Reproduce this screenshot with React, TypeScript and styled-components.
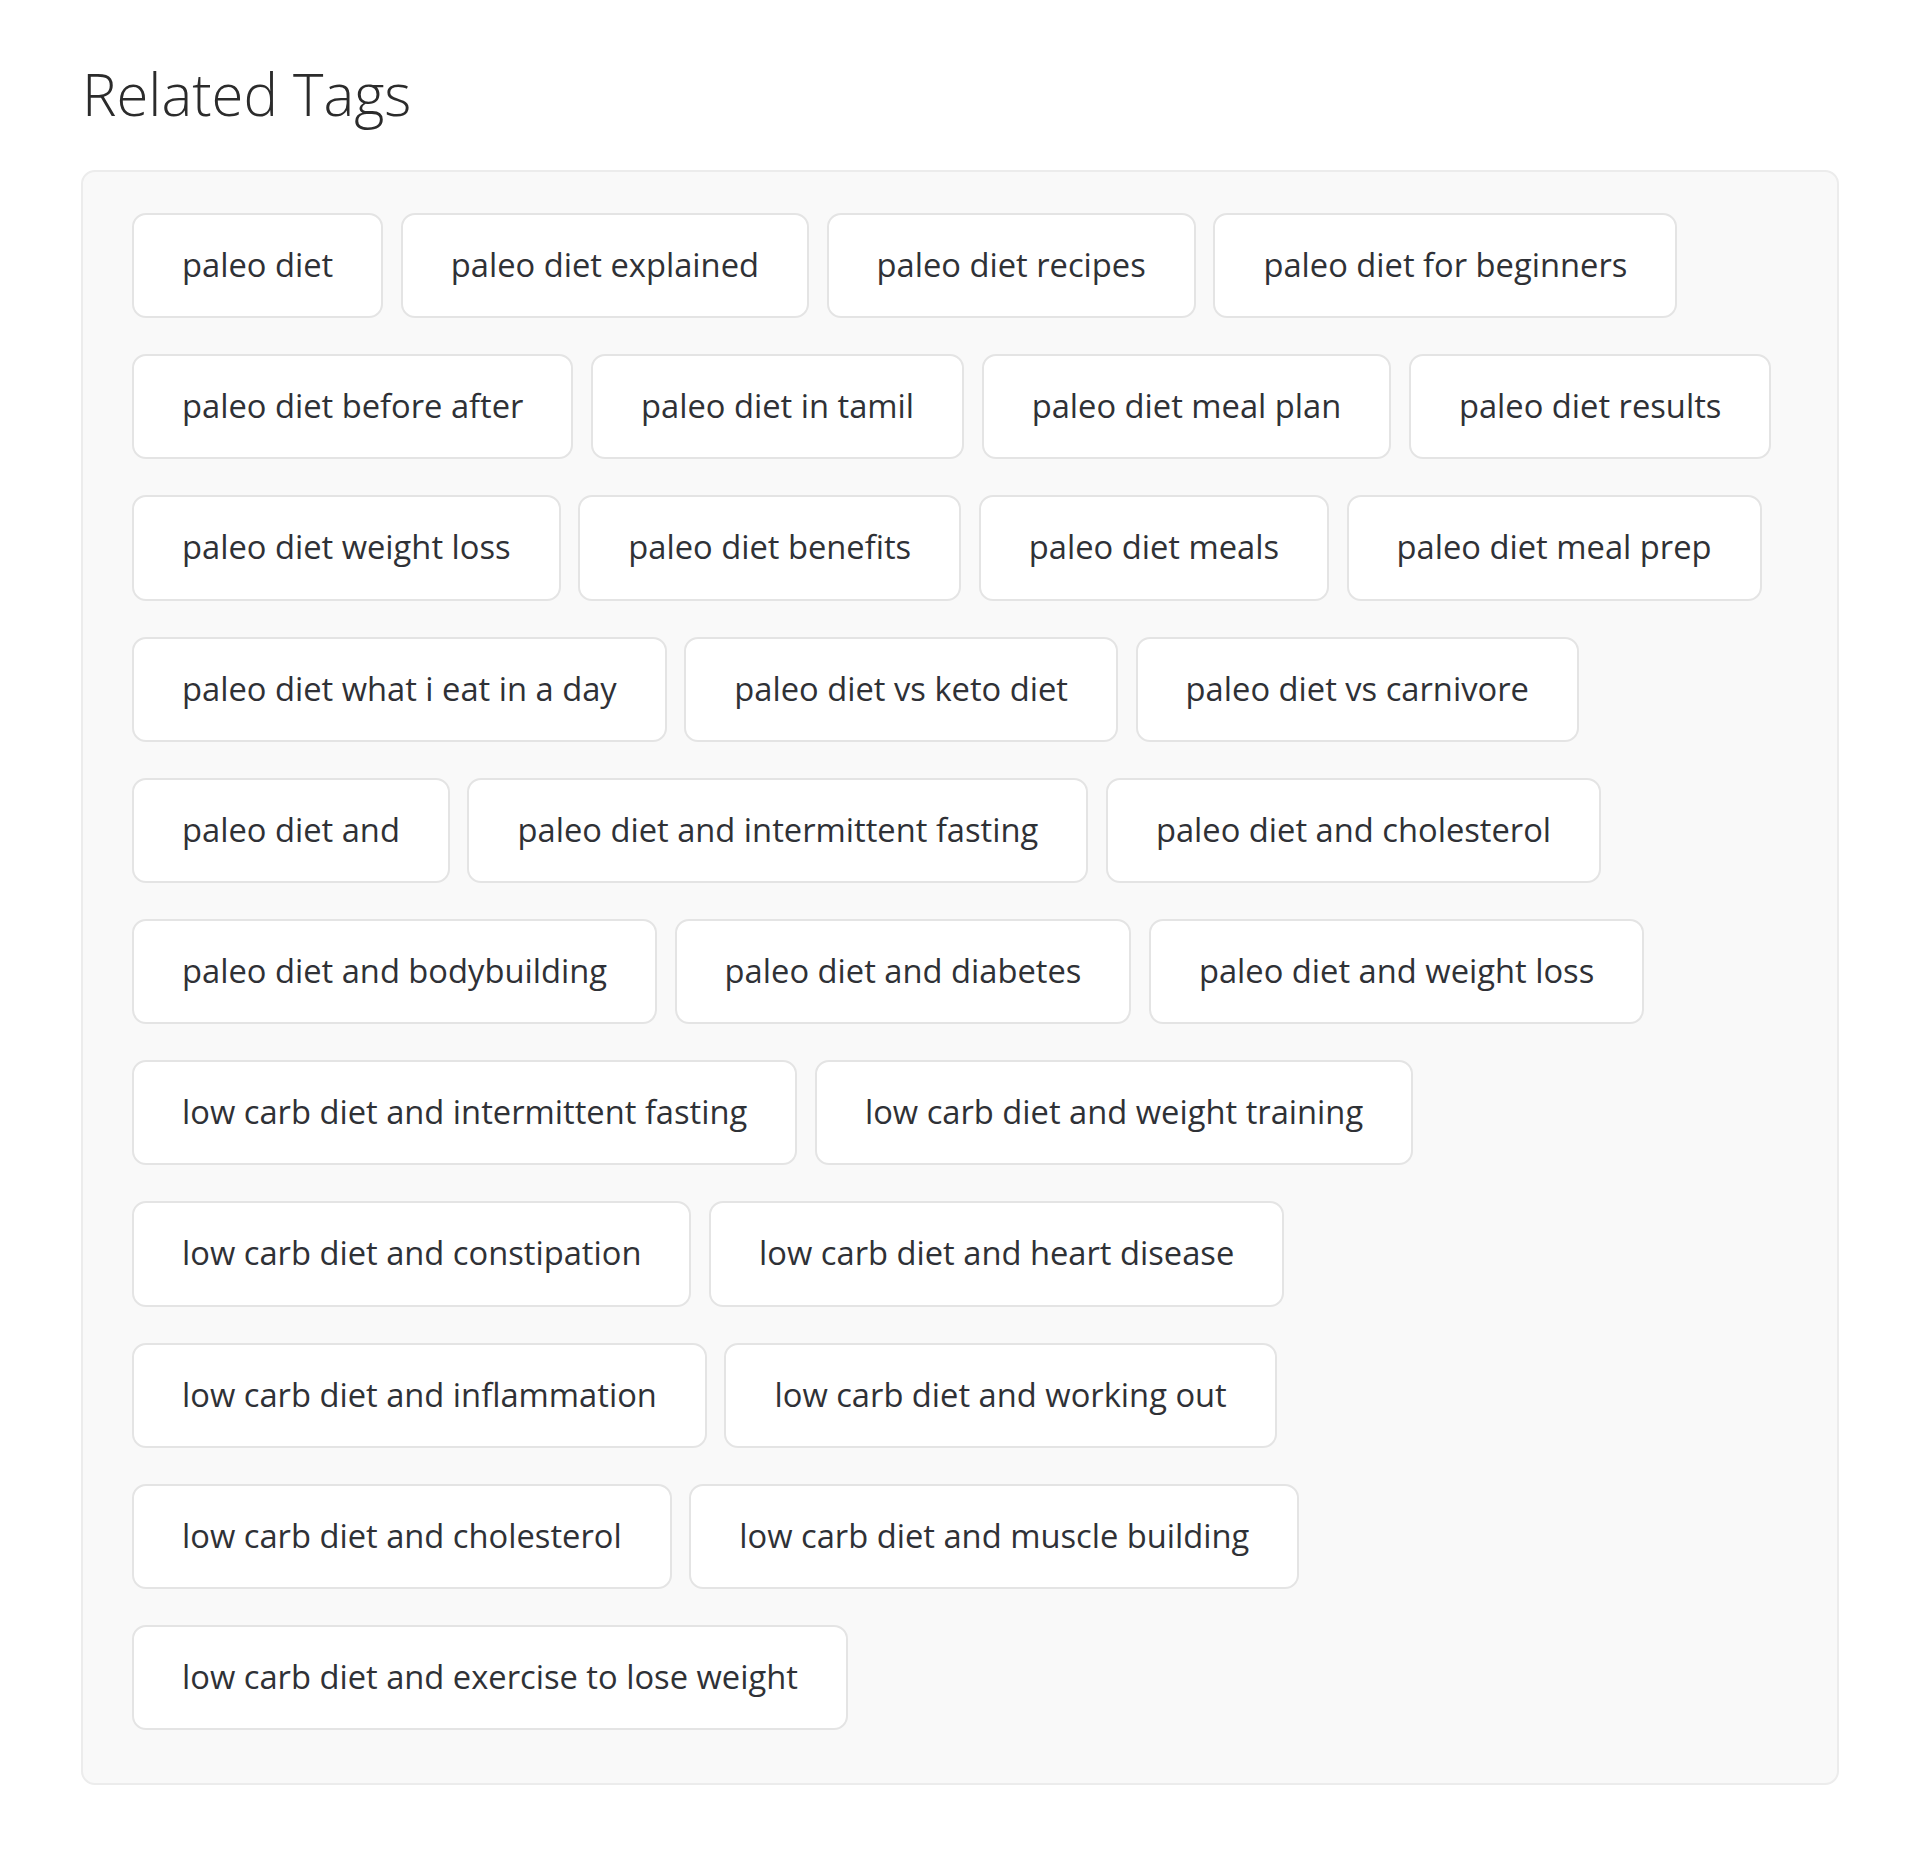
import React from "react";
import styled, { createGlobalStyle } from "styled-components";

const GlobalStyle = createGlobalStyle`
  html, body {
    margin: 0;
    padding: 0;
    background: #ffffff;
  }
  body {
    font-family: "Open Sans", "Liberation Sans", Arial, sans-serif;
    color: #333333;
  }
`;

const Page = styled.main`
  padding: 58px 81px 79px 81px;
`;

const Title = styled.h2`
  margin: 0 0 41px 0;
  font-family: "Open Sans", "Liberation Sans", Arial, sans-serif;
  font-weight: 300;
  font-size: 58px;
  line-height: 71px;
  color: #2b2b2b;
  padding-left: 1px;
`;

const TagPanel = styled.section`
  display: flex;
  flex-wrap: wrap;
  align-content: flex-start;
  column-gap: 17.6px;
  row-gap: 36px;
  padding: 41px 49px 53px 49px;
  background: #f9f9f9;
  border: 2px solid #ececec;
  border-radius: 14px;
`;

const Tag = styled.a`
  display: inline-block;
  box-sizing: border-box;
  height: 105.2px;
  padding: 27px 48px 29px 48px;
  background: #ffffff;
  border: 2px solid #e4e4e4;
  border-radius: 14px;
  font-family: "Open Sans", "Liberation Sans", Arial, sans-serif;
  font-size: 32.7px;
  line-height: 45px;
  font-weight: 400;
  color: #2f3136;
  text-decoration: none;
  white-space: nowrap;
`;

const tags = [
  "paleo diet",
  "paleo diet explained",
  "paleo diet recipes",
  "paleo diet for beginners",
  "paleo diet before after",
  "paleo diet in tamil",
  "paleo diet meal plan",
  "paleo diet results",
  "paleo diet weight loss",
  "paleo diet benefits",
  "paleo diet meals",
  "paleo diet meal prep",
  "paleo diet what i eat in a day",
  "paleo diet vs keto diet",
  "paleo diet vs carnivore",
  "paleo diet and",
  "paleo diet and intermittent fasting",
  "paleo diet and cholesterol",
  "paleo diet and bodybuilding",
  "paleo diet and diabetes",
  "paleo diet and weight loss",
  "low carb diet and intermittent fasting",
  "low carb diet and weight training",
  "low carb diet and constipation",
  "low carb diet and heart disease",
  "low carb diet and inflammation",
  "low carb diet and working out",
  "low carb diet and cholesterol",
  "low carb diet and muscle building",
  "low carb diet and exercise to lose weight",
];

export default function App() {
  return (
    <>
      <GlobalStyle />
      <Page>
        <Title>Related Tags</Title>
        <TagPanel>
          {tags.map((t) => (
            <Tag key={t} href="#">
              {t}
            </Tag>
          ))}
        </TagPanel>
      </Page>
    </>
  );
}
